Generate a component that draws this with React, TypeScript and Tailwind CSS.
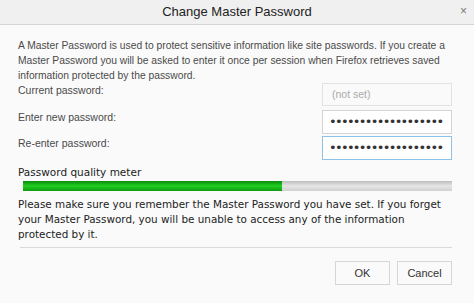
import React from 'react';

const dots = '•••••••••••••••••••';

const Field: React.FC<{ label: string; h: string; children: React.ReactNode }> = ({ label, h, children }) => (
    <div className={`flex items-start justify-between ${h}`}>
        <span className="leading-[15px]">{label}</span>
        {children}
    </div>
);

export default function App() {
    return (
        <div className="w-[474px] h-[303px] bg-[#fafafa] flex flex-col text-[#4a4a4a] overflow-hidden" style={{ fontFamily: '"Liberation Sans", Arial, sans-serif' }}>
            {/* title bar */}
            <div className="relative h-[25px] shrink-0 bg-[#f0f0f0] border-b border-[#d6d6d6] flex items-center justify-center">
                <span className="text-[13px] text-[#222]">Change Master Password</span>
                <span className="absolute right-[7px] top-[5px] text-[12px] text-[#777] leading-none">×</span>
            </div>

            <div className="flex flex-col px-[18px] pr-[22px] text-[10.3px]">
                <p className="mt-[13px] leading-[15px]">
                    A Master Password is used to protect sensitive information like site passwords. If you create a Master Password you will be asked to enter it once per session when Firefox retrieves saved information protected by the password.
                </p>

                <div className="flex flex-col text-[10.5px]">
                    <Field label="Current password:" h="h-[27px]">
                        <div className="w-[130px] h-[23px] border border-[#e3e3e3] bg-[#fafafa] text-[#aaa] px-[9px] flex items-center">(not set)</div>
                    </Field>
                    <Field label="Enter new password:" h="h-[26px]">
                        <div className="w-[130px] h-[24px] border border-[#d4d4d4] bg-white text-[#333] pl-[6px] flex items-center overflow-hidden whitespace-nowrap text-[13px] tracking-[-1.7px]" style={{ fontFamily: '"DejaVu Sans", sans-serif' }}>{dots}</div>
                    </Field>
                    <Field label="Re-enter password:" h="h-[24px]">
                        <div className="w-[130px] h-[24px] border border-[#8cc3e8] bg-white text-[#333] pl-[6px] flex items-center overflow-hidden whitespace-nowrap text-[13px] tracking-[-1.7px]" style={{ fontFamily: '"DejaVu Sans", sans-serif' }}>{dots}</div>
                    </Field>
                </div>

                <div className="text-[#222]" style={{ fontFamily: '"DejaVu Sans", Verdana, sans-serif' }}>
                    <div className="mt-[5px] text-[10.5px] leading-[14px]">Password quality meter</div>
                    <div className="ml-[5px] mt-[2px] h-[10px] bg-gradient-to-b from-[#bdbdbd] via-[#e6e6e6] to-[#d0d0d0] flex">
                        <div className="w-[259px] h-full bg-gradient-to-b from-[#0a8a0a] via-[#22d022] to-[#0e9a0e]" />
                    </div>
                    <p className="mt-[6px] text-[10.4px] leading-[15px]">
                        Please make sure you remember the Master Password you have set. If you forget your Master Password, you will be unable to access any of the information protected by it.
                    </p>
                </div>

                <div className="mt-[5px] ml-[2px] border-t border-[#d9d9d9]" />

                <div className="mt-[13px] flex justify-end gap-[7px]">
                    <button className="w-[55px] h-[24px] border border-[#d6d6d6] bg-[#fafafa] text-[#333] text-[11px]">OK</button>
                    <button className="w-[55px] h-[24px] border border-[#d6d6d6] bg-[#fafafa] text-[#333] text-[11px]">Cancel</button>
                </div>
            </div>
        </div>
    );
}
